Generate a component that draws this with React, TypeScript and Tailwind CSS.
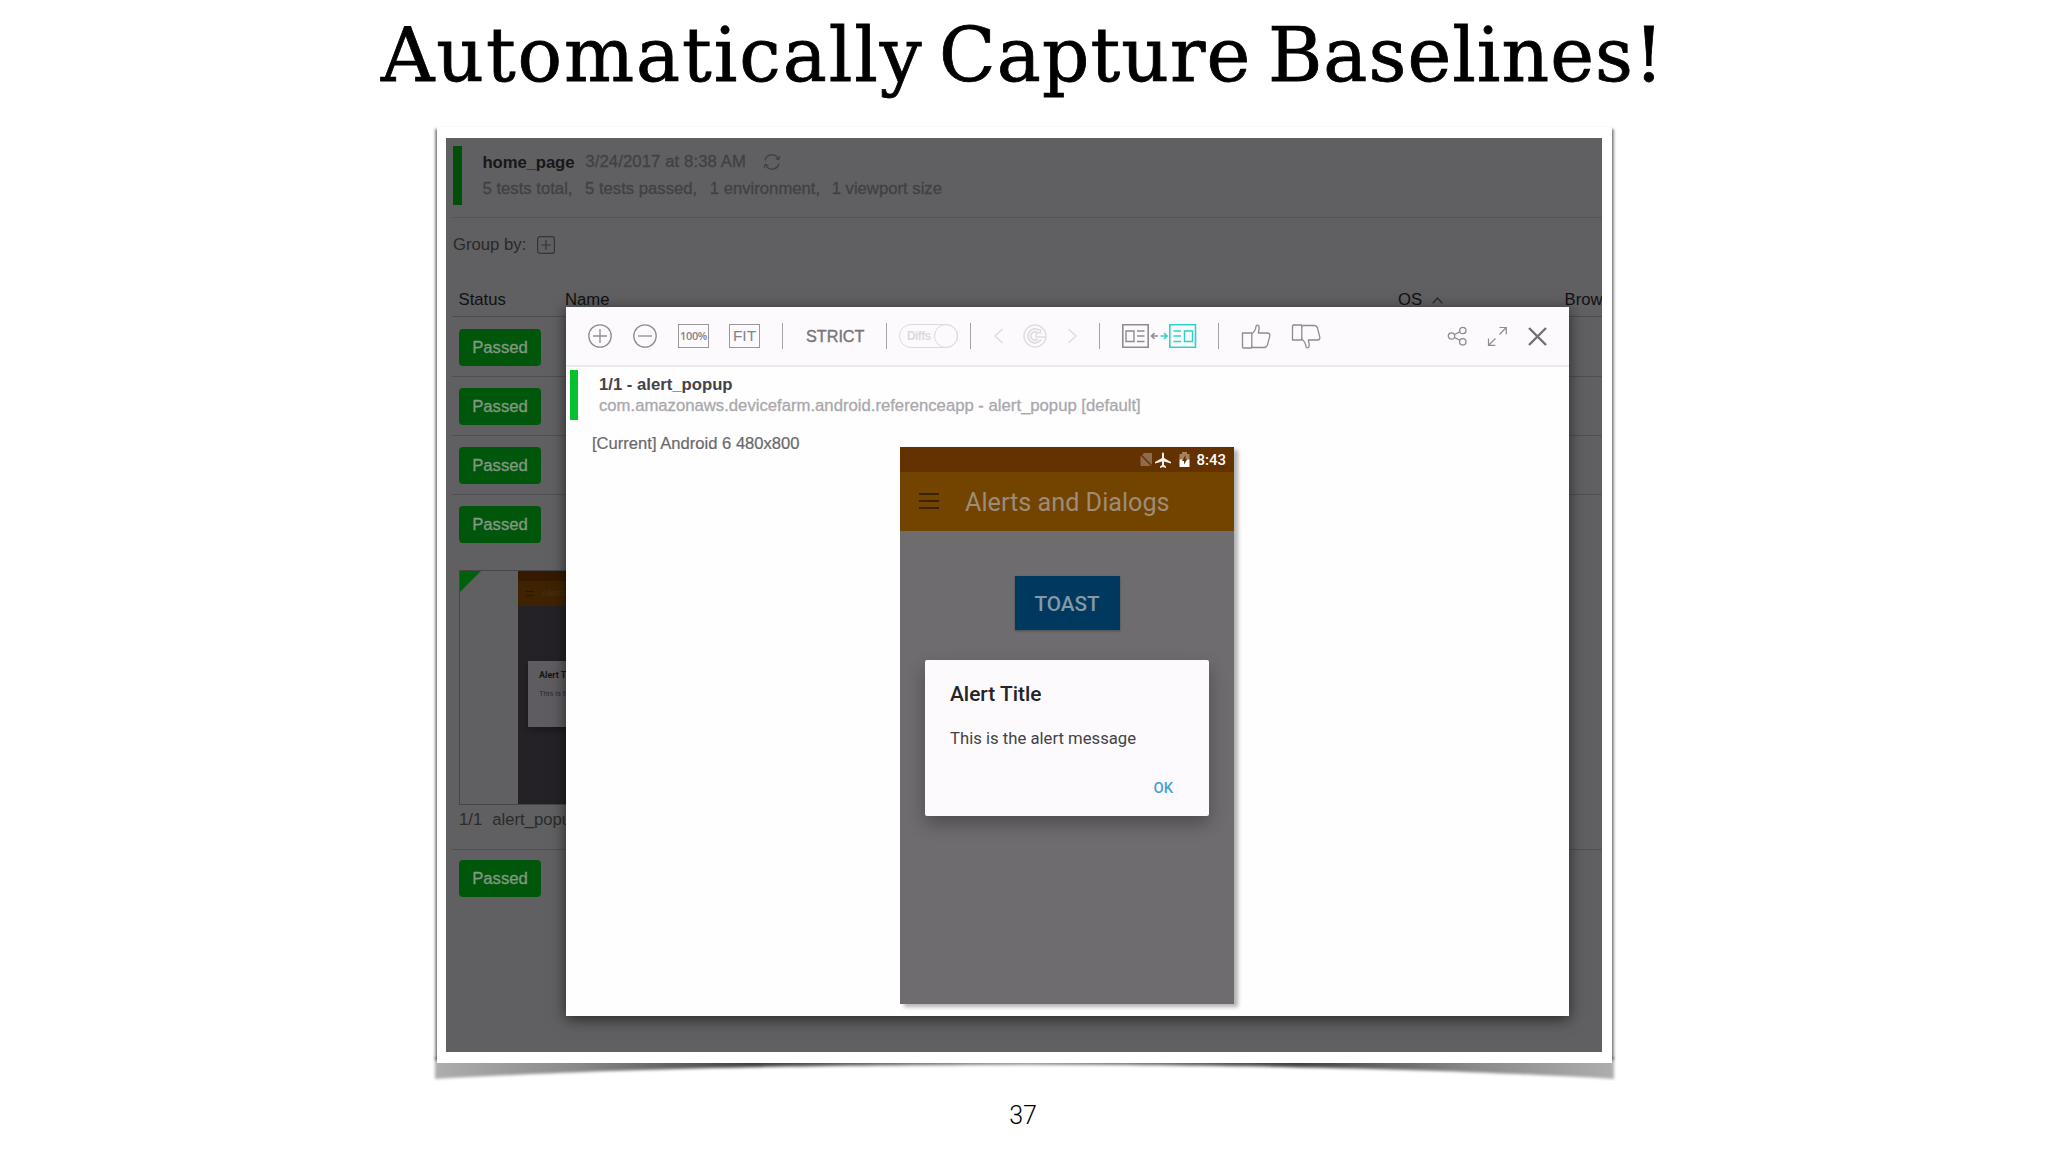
import type { ReactNode } from "react";

const toolbarGray = "#8f8c91";

function Divider({ className }: { className: string }) {
  return <span className={`h-[26px] w-px shrink-0 bg-[#a5a3a7] ${className}`} />;
}

function PassedBadge() {
  return (
    <span className="flex h-[37px] w-[82px] items-center justify-center rounded-[4px] bg-[#00570b] text-[16.7px] text-[#859884] [-webkit-text-stroke:0.3px_#859884]">
      Passed
    </span>
  );
}

function StatusRow({ children, className = "h-[59px] pt-[11px]" }: { children: ReactNode; className?: string }) {
  return <div className={`border-b border-[#504f51] pl-[7px] ${className}`}>{children}</div>;
}

function RefreshIcon() {
  return (
    <svg className="ml-[17px] h-[18px] w-[18px]" viewBox="0 0 18 18" fill="none" stroke="#3f3f40" strokeWidth="1.2">
      <path d="M2 7.5A7.2 7.2 0 0 1 15.6 6.2M16 10.5A7.2 7.2 0 0 1 2.4 11.8" />
      <path d="M16.8 3.2l-1 3.4-3.2-1M1.2 14.8l1-3.4 3.2 1" />
    </svg>
  );
}

function ZoomIcon({ plus, className = "" }: { plus?: boolean; className?: string }) {
  return (
    <svg className={`h-6 w-6 shrink-0 ${className}`} viewBox="0 0 24 24" fill="none" stroke={toolbarGray} strokeWidth="1.3">
      <circle cx="12" cy="12" r="11.2" />
      <path d={plus ? "M5 12h14M12 5v14" : "M5 12h14"} />
    </svg>
  );
}

function CompareIcon() {
  return (
    <svg className="ml-[22px] h-6 w-[75px] shrink-0" viewBox="0 0 75 24" fill="none" stroke={toolbarGray} strokeWidth="1.6">
      <path d="M.8.8h25.4v22.4H.8z" />
      <path d="M4 7h8v10.5H4zM15 7h7.5M15 12h7.5M15 17.5h7.5" strokeWidth="1.4" />
      <path d="M36 12h-6.5M32.5 9l-3 3 3 3" />
      <g stroke="#2ed3c6">
        <path d="M38.5 12H45M42 9l3 3-3 3" />
        <path d="M47.8.8h25.7v22.4H47.8z" />
        <path d="M62.5 7h8v10.5h-8zM51.5 7H59M51.5 12H59M51.5 17.5H59" strokeWidth="1.4" />
      </g>
    </svg>
  );
}

function ThumbIcon({ down, className }: { down?: boolean; className: string }) {
  return (
    <svg className={`h-[25px] w-[30px] shrink-0 ${className}`} viewBox="0 0 30 25" fill="none" stroke={toolbarGray} strokeWidth="1.3" strokeLinejoin="round">
      <g transform={down ? "matrix(1 0 0 -1 0 25)" : undefined}>
        <path d="M1.5 9h9.3v15H2.5q-1 0-1-1z" />
        <path d="M10.8 9.8C13.5 8 14.6 5.5 15 2.5c.2-2 2.5-1.6 3 0 .5 2 .1 4-.7 6.5h9.2c1.8 0 2.6 1 2.3 2.8l-2.3 9c-.5 1.8-1.5 2.6-3.2 2.7H12.5l-1.7-.8" />
      </g>
    </svg>
  );
}

function Toolbar() {
  return (
    <div className="flex h-[60px] items-center border-b-2 border-[#ebeaec] bg-[#fcfafd] px-[22px] text-[#858387]">
      <ZoomIcon plus />
      <ZoomIcon className="ml-[21px]" />
      <span className="ml-[21px] flex h-6 w-[31px] shrink-0 items-center justify-center border-[1.5px] border-[#99979b] pt-px font-['Open_Sans','Noto_Sans',sans-serif] text-[11px] font-semibold tracking-[-0.4px]">
        100%
      </span>
      <span className="ml-5 flex h-6 w-[31px] shrink-0 items-center justify-center border-[1.5px] border-[#99979b] text-[15.5px]">
        FIT
      </span>
      <Divider className="ml-[22px]" />
      <span className="ml-[23px] w-[58px] whitespace-nowrap text-[16.2px] text-[#78767a] [-webkit-text-stroke:0.4px_#78767a]">STRICT</span>
      <Divider className="ml-[22px]" />
      <span className="ml-3 flex h-6 w-[59px] shrink-0 items-center justify-between rounded-full border border-[#dcdadd] pl-[7px] text-[12px] font-bold tracking-[-0.6px] text-[#dcdadd]">
        Diffs
        <span className="-mr-px h-6 w-6 rounded-full border border-[#dcdadd]" />
      </span>
      <Divider className="ml-3" />
      <svg className="ml-[23px] h-4 w-[9px] shrink-0" viewBox="0 0 9 16" fill="none" stroke="#dcdadd" strokeWidth="1.3">
        <path d="M8.5 1L1 8l7.5 7" />
      </svg>
      <svg className="ml-5 h-6 w-6 shrink-0" viewBox="0 0 24 24" fill="none" stroke="#dfdde0" strokeWidth="1.8">
        <circle cx="12" cy="12" r="11" strokeWidth="1.4" />
        <path d="M16.5 6.5A7 7 0 1 0 18 15.5M14.5 9A4 4 0 1 0 14.5 15" />
        <path d="M13 9.5v3.5h10M17.5 5v4h-4" strokeWidth="1.4" />
      </svg>
      <svg className="ml-[21px] h-4 w-[9px] shrink-0" viewBox="0 0 9 16" fill="none" stroke="#dcdadd" strokeWidth="1.3">
        <path d="M.5 1L8 8l-7.5 7" />
      </svg>
      <Divider className="ml-[22px]" />
      <CompareIcon />
      <Divider className="ml-[21px]" />
      <ThumbIcon className="ml-[22px]" />
      <ThumbIcon down className="ml-5" />
      <svg className="ml-auto h-5 w-5 shrink-0" viewBox="0 0 20 20" fill="none" stroke={toolbarGray} strokeWidth="1.3">
        <circle cx="4.5" cy="10" r="3.2" />
        <circle cx="15.8" cy="4.5" r="3.2" />
        <circle cx="15.8" cy="15.8" r="3.2" />
        <path d="M7.5 8.5l5.2-2.6M7.5 11.5l5.2 2.7" />
      </svg>
      <svg className="ml-5 h-[21px] w-[21px] shrink-0" viewBox="0 0 21 21" fill="none" stroke={toolbarGray} strokeWidth="1.2">
        <path d="M12.5 8.5L19.3 1.5M12.5 1.5h6.8v6.8M8.5 12.5L1.5 19.3M1.5 12.5v6.8h6.8" />
      </svg>
      <svg className="ml-5 h-[19px] w-[19px] shrink-0" viewBox="0 0 19 19" fill="none" stroke="#727074" strokeWidth="2.4">
        <path d="M1 1l17 17M18 1L1 18" />
      </svg>
    </div>
  );
}

function PhoneScreen() {
  return (
    <div className="relative mt-[27px] flex h-[557px] w-[334px] flex-col bg-[#6e6c6f] font-[Roboto,sans-serif] shadow-[4px_3px_4px_rgba(0,0,0,0.3)]">
      <div className="flex h-[25px] items-center justify-end bg-[#643100] pr-2 text-white">
        <svg className="h-[13px] w-[12px]" viewBox="0 0 12 13">
          <path d="M4 0h8v13H.5V3.5z" fill="#8f6a4c" />
          <path d="M0 1l12 12" stroke="#643100" strokeWidth="1.5" />
        </svg>
        <svg className="ml-[3px] h-4 w-4" viewBox="0 0 16 16" fill="#f4f0ec">
          <path d="M7 1.5a1 1 0 0 1 2 0V6l7 4v1.5L9 9.5V13l2 1.5V16l-3-1-3 1v-1.5L7 13V9.5l-7 2V10l7-4z" />
        </svg>
        <svg className="ml-2 h-[15px] w-[11px]" viewBox="0 0 11 15">
          <path d="M.5 2H3V0h5v2h2.5v6H.5z" fill="#a5825f" />
          <path d="M.5 7.5h10V15H.5z" fill="#fff" />
          <path d="M6.5 3L3 9h2v3.5L8.3 7H6.5z" fill="#643100" />
        </svg>
        <span className="ml-[6px] pt-px text-[15px] font-medium leading-5">8:43</span>
      </div>
      <div className="flex h-[59px] items-center bg-[#734300] pl-[19px]">
        <div className="-mt-px flex w-5 flex-col gap-[5px]">
          <span className="h-[2px] bg-[#3c2300]" />
          <span className="h-[2px] bg-[#3c2300]" />
          <span className="h-[2px] bg-[#3c2300]" />
        </div>
        <span className="ml-[26px] pt-[2px] text-[25.2px] leading-none text-[#9c8c78]">Alerts and Dialogs</span>
      </div>
      <div className="mx-auto mt-[45px] flex h-[54px] w-[105px] items-center justify-center bg-[#00395f] pt-[3px] text-[20.7px] font-medium text-[#8499a7] shadow-[0_1px_2px_rgba(0,0,0,0.3)]">
        TOAST
      </div>
      <div className="absolute left-[25px] top-[213px] flex h-[156px] w-[284px] flex-col rounded-[2px] bg-[#fcfafd] pl-[25px] pt-[22px] shadow-[0_8px_18px_rgba(0,0,0,0.3)]">
        <h3 className="text-[20.9px] font-medium leading-6 text-[#252327]">Alert Title</h3>
        <p className="mt-[23px] text-[16.7px] leading-5 text-[#444246]">This is the alert message</p>
        <span className="mr-[36px] mt-[28.5px] self-end text-[14.8px] font-medium leading-5 text-[#43a2d5]">OK</span>
      </div>
    </div>
  );
}

function TestModal() {
  return (
    <div className="absolute left-[120px] top-[169px] h-[709px] w-[1003px] bg-[#fefefe] shadow-[0_3px_14px_rgba(0,0,0,0.6)]">
      <Toolbar />
      <div className="flex pl-1 pt-[3px]">
        <span className="h-[50px] w-2 bg-[#05c02f]" />
        <div className="ml-[21px] pt-[5px] text-[16.7px] leading-5">
          <h2 className="font-bold text-[#454347]">1/1 - alert_popup</h2>
          <p className="mt-px whitespace-nowrap text-[#aaa8ab] [-webkit-text-stroke:0.3px_#aaa8ab]">
            com.amazonaws.devicefarm.android.referenceapp - alert_popup [default]
          </p>
        </div>
      </div>
      <div className="flex items-start pl-[26px]">
        <span className="mt-[14px] w-[308px] text-[16.6px] leading-5 text-[#6a686b] [-webkit-text-stroke:0.2px_#6a686b]">
          [Current] Android 6 480x800
        </span>
        <PhoneScreen />
      </div>
    </div>
  );
}

function ResultsPage() {
  return (
    <div className="relative h-full overflow-hidden bg-[#605f61]">
      <header className="ml-[7px] flex h-20 border-b border-[#545355] pt-2">
        <span className="h-[59px] w-[8.5px] bg-[#00500a]" />
        <div className="ml-[21px] pt-[6px] text-[16.7px] leading-5">
          <div className="flex items-center">
            <span className="pt-px font-bold leading-[19px] tracking-[-0.1px] text-[#17171a]">home_page</span>
            <span className="ml-[11px] tracking-[0.1px] text-[#414142] [-webkit-text-stroke:0.3px_#414142]">3/24/2017 at 8:38 AM</span>
            <RefreshIcon />
          </div>
          <div className="mt-[7px] flex gap-[12.5px] text-[#414142] [-webkit-text-stroke:0.3px_#414142]">
            <span>5 tests total,</span>
            <span>5 tests passed,</span>
            <span>1 environment,</span>
            <span className="-ml-px">1 viewport size</span>
          </div>
        </div>
      </header>

      <div className="ml-[7px] mt-[17px] flex h-5 items-center text-[16.7px] leading-5 text-[#29292a]">
        Group by:
        <svg className="-mt-px ml-[11px] h-[18px] w-[18px]" viewBox="0 0 18 18" fill="none" stroke="#353536" strokeWidth="1.2">
          <rect x=".6" y=".6" width="16.8" height="16.8" rx="2.5" />
          <path d="M4 9h10M9 4v10" />
        </svg>
      </div>

      <div className="ml-[6px] mt-[35px]">
        <div className="mb-px flex h-[27px] border-b border-[#4c4b4d] text-[16.7px] leading-5 text-[#111]">
          <span className="w-[113px] shrink-0 pl-[6.5px]">Status</span>
          <span className="w-[833px] shrink-0">Name</span>
          <span className="flex w-[166.5px] shrink-0">
            OS
            <svg className="ml-[10px] mt-[7px] h-[7px] w-[11px]" viewBox="0 0 11 7" fill="none" stroke="#2b2a2c" strokeWidth="1.3">
              <path d="M.8 6.2L5.5 1l4.7 5.200" />
            </svg>
          </span>
          <span className="whitespace-nowrap">Brow</span>
        </div>
        <StatusRow><PassedBadge /></StatusRow>
        <StatusRow><PassedBadge /></StatusRow>
        <StatusRow><PassedBadge /></StatusRow>
        <StatusRow className="h-[355px] pt-[11px]">
          <PassedBadge />
          <div className="mt-[27px] flex h-[235px] w-[300px] border border-[#464547]">
            <svg className="h-[21px] w-[21px]" viewBox="0 0 21 21">
              <path d="M0 0h21L0 21z" fill="#00610c" />
            </svg>
            <div className="ml-[37px] h-full w-[140px] bg-[#242226]">
              <div className="h-[10px] bg-[#351a00]" />
              <div className="flex h-[25px] items-center gap-2 bg-[#3f2300] pl-2 text-[9px] text-[#493219]">
                <span className="h-[5px] w-2 border-y border-[#2c1800]" />
                <span className="whitespace-nowrap">Alerts and Dialogs</span>
              </div>
              <div className="ml-[10px] mt-[55px] h-[66px] w-[119px] bg-[#5e5c60] pl-[11px] pt-2 font-[Roboto,sans-serif] leading-3 text-[#151416] shadow-[0_3px_6px_rgba(0,0,0,0.3)]">
                <div className="text-[9px] font-bold">Alert Title</div>
                <div className="mt-[7px] whitespace-nowrap text-[7.5px] text-[#2b2a2d]">This is the alert message</div>
              </div>
            </div>
          </div>
          <div className="mt-[5px] flex gap-[10px] text-[16.7px] leading-5 text-[#2b2b2c]">
            <span>1/1</span>
            <span>alert_popup</span>
          </div>
        </StatusRow>
        <div className="pl-[7px] pt-[10px]"><PassedBadge /></div>
      </div>

      <TestModal />
    </div>
  );
}

/** Lifted-paper shadow that hangs below the picture frame. */
function FrameShadow() {
  return (
    <svg className="absolute -left-[20px] -top-[20px] h-[1000px] w-[1215px]" viewBox="0 0 1215 1000">
      <defs>
        <filter id="soft" x="-5%" y="-5%" width="110%" height="110%">
          <feGaussianBlur stdDeviation="1.6" />
        </filter>
        <linearGradient id="curl" x1="0" x2="1" y1="0" y2="0">
          <stop offset="0" stopOpacity="0.32" />
          <stop offset="0.12" stopOpacity="0.46" />
          <stop offset="0.27" stopOpacity="0.75" />
          <stop offset="0.5" stopOpacity="0.4" />
          <stop offset="0.73" stopOpacity="0.75" />
          <stop offset="0.88" stopOpacity="0.46" />
          <stop offset="1" stopOpacity="0.32" />
        </linearGradient>
      </defs>
      <rect x="18.5" y="22" width="1178" height="931" opacity="0.6" filter="url(#soft)" />
      <path d="M18 950H1197V972C1040 963 880 958 607 958S175 963 18 972z" fill="url(#curl)" filter="url(#soft)" />
    </svg>
  );
}

export default function App() {
  return (
    <main className="flex h-[1152px] w-[2048px] flex-col overflow-hidden bg-white font-['Liberation_Sans',Arial,sans-serif]">
      <h1 className="h-[110px] whitespace-nowrap pl-[381px] pt-px font-['DejaVu_Serif',serif] text-[74px] leading-[109px] text-black [-webkit-text-stroke:0.8px_black]">
        <span className="tracking-[1.9px]">Automatically</span>{" "}
        <span className="-ml-[8px] tracking-[1.1px]">Capture</span>{" "}
        <span className="-ml-[7px] tracking-[1px]">Baselines!</span>
      </h1>

      <div className="relative ml-[437px] mt-[17px] h-[936px] w-[1175px] shrink-0">
        <FrameShadow />
        <div className="relative h-full bg-white pb-[11px] pl-[9px] pr-[10px] pt-[11px]">
          <ResultsPage />
        </div>
      </div>

      <footer className="mt-[38px] pr-[2px] text-center font-[Roboto,sans-serif] text-[25px] font-light leading-[30px] text-black">37</footer>
    </main>
  );
}
